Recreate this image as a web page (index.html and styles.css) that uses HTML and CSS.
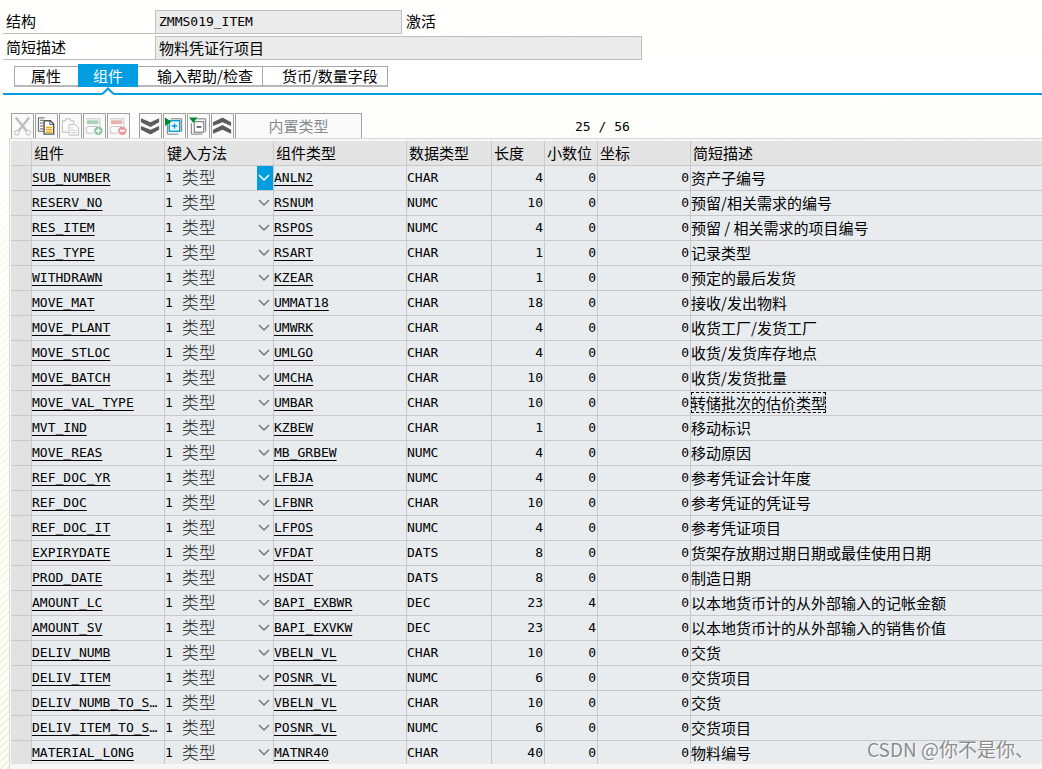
FILE: index.html
```html
<!DOCTYPE html>
<html lang="zh-CN">
<head>
    <meta charset="UTF-8">
    <meta name="viewport" content="width=device-width, initial-scale=1.0">
    <title>ZMMS019_ITEM</title>
    <link rel="stylesheet" href="styles.css">
</head>
<body>
    <form class="fields">
        <div class="field-row">
            <label for="structure">结构</label>
            <input class="mono name-input" id="structure" value="ZMMS019_ITEM" readonly>
            <span class="status">激活</span>
        </div>
        <div class="field-row">
            <label for="description">简短描述</label>
            <input class="description-input" id="description" value="物料凭证行项目" readonly>
        </div>
    </form>

    <nav class="tabs">
        <button class="tab">属性</button>
        <button class="tab selected">组件
            <svg class="caret" width="12" height="8" viewBox="0 0 12 8"><path d="M0 8V6.500L6 1L12 6.500V8Z" fill="#fff"/><path d="M0 6.500H1L6 1.500L11 6.500H12" fill="none" stroke="#009de0" stroke-width="2"/></svg>
        </button>
        <button class="tab wide">输入帮助/检查</button>
        <button class="tab wide">货币/数量字段</button>
    </nav>

    <div class="toolbar">
        <div class="tools">
            <button class="tool disabled" aria-label="剪切">
                <svg viewBox="0 0 22 24"><path d="M4 3L15 17M18 3L7 17" stroke="#c0c0c0" stroke-width="2.500" fill="none"/><circle cx="5" cy="19" r="2.500" stroke="#bbb" fill="none"/><circle cx="17" cy="19" r="2.500" stroke="#bbb" fill="none"/></svg>
            </button>
            <button class="tool" aria-label="复制">
                <svg viewBox="0 0 22 24"><path d="M8 17.500H2.500V3.500H9" stroke="#555" fill="#fff"/><path d="M4 6H8M4 9H8M4 12H8M4 15H8" stroke="#555"/><path d="M8.500 6.500H15L18.500 10V20.500H8.500Z" stroke="#555" stroke-width="1.500" fill="#fff"/><path d="M14.500 6.500V10.500H18.500" stroke="#555" fill="none"/><path d="M10.500 13.500H17M10.500 16H17M10.500 18.500H17" stroke="#f0ab00" stroke-width="1.500"/></svg>
            </button>
            <button class="tool disabled" aria-label="粘贴">
                <svg viewBox="0 0 22 24"><path d="M9 18.500H2.500V6.500H6V4.500H11V6.500H14.500V10" stroke="#bbb" fill="none"/><path d="M9.500 10.500H15L19.500 14V21.500H9.500Z" stroke="#bbb" fill="#fff"/><path d="M11 14H14M11 16.500H18M11 19H18" stroke="#c4c9d4"/></svg>
            </button>
            <button class="tool disabled" aria-label="插入行">
                <svg viewBox="0 0 22 24"><path d="M3 8H15" stroke="#a7d1b8" stroke-width="4"/><path d="M2 4.500H16M16.500 4V12M3 12.500H14M2.500 13V19.500H10" stroke="#c2c2c2" fill="none"/><circle cx="15" cy="17" r="4.500" fill="#8cc6a0"/><path d="M12.500 17H17.500M15 14.500V19.500" stroke="#fff" stroke-width="1.500"/></svg>
            </button>
            <button class="tool disabled" aria-label="删除行">
                <svg viewBox="0 0 22 24"><path d="M3 8H15" stroke="#e9b0b0" stroke-width="4"/><path d="M2 4.500H16M16.500 4V12M3 12.500H14M2.500 13V19.500H10" stroke="#c2c2c2" fill="none"/><circle cx="15" cy="17" r="4.500" fill="#e69c9c"/><path d="M12.500 17H17.500" stroke="#fff" stroke-width="2"/></svg>
            </button>
        </div>
        <div class="tools">
            <button class="tool" aria-label="全部展开">
                <svg viewBox="0 0 22 24"><path d="M1 4L11 8L20 4V8L11 13L1 8ZM1 12L11 16L20 12V16L11 21L1 16Z" fill="#5c5c5c"/></svg>
            </button>
            <button class="tool" aria-label="展开">
                <svg viewBox="0 0 22 24"><path d="M7 4.500H18.500V18M3.500 10V20.500H15" stroke="#777" fill="none"/><rect x="5.500" y="6.500" width="11" height="11" stroke="#009de0" stroke-width="1.500" fill="#fff"/><path d="M8 12H14M11 9V15" stroke="#009de0" stroke-width="1.500"/><path d="M1 3L8 7.500L1 12Z" fill="#008a2e"/></svg>
            </button>
            <button class="tool" aria-label="折叠">
                <svg viewBox="0 0 22 24"><path d="M9 4.500H18.500V18M3.500 9V20.500H15" stroke="#777" fill="none"/><rect x="6.500" y="7.500" width="10" height="11" stroke="#666" fill="#fff"/><path d="M9 13H14" stroke="#333" stroke-width="1.500"/><path d="M1 3H10L5.500 8.500Z" fill="#008a2e"/></svg>
            </button>
            <button class="tool" aria-label="全部折叠">
                <svg viewBox="0 0 22 24"><path d="M1 8L11 3L20 8V12L11 8L1 12ZM1 16L11 11L20 16V20L11 16L1 20Z" fill="#5c5c5c"/></svg>
            </button>
            <button class="tool builtin">内置类型</button>
        </div>
        <span class="mono counter">25 / 56</span>
    </div>

    <div class="grid-frame">
        <table class="grid">
            <colgroup>
                <col class="col-mark"><col class="col-name"><col class="col-method"><col class="col-type"><col class="col-data"><col class="col-length"><col class="col-decimals"><col class="col-coord"><col>
            </colgroup>
            <thead>
                <tr><th></th><th>组件</th><th>键入方法</th><th>组件类型</th><th>数据类型</th><th>长度</th><th>小数位</th><th>坐标</th><th>简短描述</th></tr>
            </thead>
            <tbody id="rows"></tbody>
        </table>
    </div>
    <div class="watermark">CSDN @你不是你、</div>

    <script>
        const components = [
            ['SUB_NUMBER', 'ANLN2', 'CHAR', 4, 0, '资产子编号'],
            ['RESERV_NO', 'RSNUM', 'NUMC', 10, 0, '预留/相关需求的编号'],
            ['RES_ITEM', 'RSPOS', 'NUMC', 4, 0, '预留 / 相关需求的项目编号'],
            ['RES_TYPE', 'RSART', 'CHAR', 1, 0, '记录类型'],
            ['WITHDRAWN', 'KZEAR', 'CHAR', 1, 0, '预定的最后发货'],
            ['MOVE_MAT', 'UMMAT18', 'CHAR', 18, 0, '接收/发出物料'],
            ['MOVE_PLANT', 'UMWRK', 'CHAR', 4, 0, '收货工厂/发货工厂'],
            ['MOVE_STLOC', 'UMLGO', 'CHAR', 4, 0, '收货/发货库存地点'],
            ['MOVE_BATCH', 'UMCHA', 'CHAR', 10, 0, '收货/发货批量'],
            ['MOVE_VAL_TYPE', 'UMBAR', 'CHAR', 10, 0, '转储批次的估价类型'],
            ['MVT_IND', 'KZBEW', 'CHAR', 1, 0, '移动标识'],
            ['MOVE_REAS', 'MB_GRBEW', 'NUMC', 4, 0, '移动原因'],
            ['REF_DOC_YR', 'LFBJA', 'NUMC', 4, 0, '参考凭证会计年度'],
            ['REF_DOC', 'LFBNR', 'CHAR', 10, 0, '参考凭证的凭证号'],
            ['REF_DOC_IT', 'LFPOS', 'NUMC', 4, 0, '参考凭证项目'],
            ['EXPIRYDATE', 'VFDAT', 'DATS', 8, 0, '货架存放期过期日期或最佳使用日期'],
            ['PROD_DATE', 'HSDAT', 'DATS', 8, 0, '制造日期'],
            ['AMOUNT_LC', 'BAPI_EXBWR', 'DEC', 23, 4, '以本地货币计的从外部输入的记帐金额'],
            ['AMOUNT_SV', 'BAPI_EXVKW', 'DEC', 23, 4, '以本地货币计的从外部输入的销售价值'],
            ['DELIV_NUMB', 'VBELN_VL', 'CHAR', 10, 0, '交货'],
            ['DELIV_ITEM', 'POSNR_VL', 'NUMC', 6, 0, '交货项目'],
            ['DELIV_NUMB_TO_S…', 'VBELN_VL', 'CHAR', 10, 0, '交货'],
            ['DELIV_ITEM_TO_S…', 'POSNR_VL', 'NUMC', 6, 0, '交货项目'],
            ['MATERIAL_LONG', 'MATNR40', 'CHAR', 40, 0, '物料编号']
        ];
        const focusedRow = 9;

        document.getElementById('rows').innerHTML = components.map(([name, type, data, length, decimals, text], i) => {
            const cut = name.endsWith('…');
            const label = cut ? name.slice(0, -1) : name;
            return `<tr>
                <td class="mark"></td>
                <td class="mono"><a href="#">${label}</a>${cut ? '…' : ''}</td>
                <td><div class="method"><span class="mono">1</span><select class="${i === 0 ? 'active' : ''}" aria-label="键入方法 ${label}"><option>类型</option></select></div></td>
                <td class="mono"><a href="#">${type}</a></td>
                <td class="mono">${data}</td>
                <td class="mono num">${length}</td>
                <td class="mono num">${decimals}</td>
                <td class="mono num">0</td>
                <td><span class="${i === focusedRow ? 'focused' : ''}">${text}</span></td>
            </tr>`;
        }).join('');
    </script>
</body>
</html>
```
FILE: styles.css
```css
* {
    box-sizing: border-box;
}
body {
    margin: 0;
    min-height: 100vh;
    position: relative;
    font-family: "Noto Sans CJK SC", sans-serif;
    font-size: 15px;
    font-weight: 400;
    line-height: 20px;
    color: #000;
    background: linear-gradient(#fffffe, rgba(255, 255, 250, 0.2)), repeating-linear-gradient(135deg, #fff 0 3px, #f4efcf 3px 5px);
}
button, input, select {
    font: inherit;
    color: inherit;
    margin: 0;
    border-radius: 0;
}
.mono {
    font-family: "DejaVu Sans Mono", monospace;
    font-size: 13px;
}
.fields {
    display: flex;
    flex-direction: column;
    gap: 2px;
    padding: 10px 0 0 3px;
}
.field-row {
    display: flex;
    height: 24px;
}
.field-row label {
    width: 152px;
    padding: 1px 3px;
    border-bottom: 1px solid #bdbdbd;
}
.field-row input {
    padding: 0 3px;
    background: #ebebeb;
    border: 1px solid #bfbfbf;
    outline: none;
}
.name-input {
    width: 247px;
}
.description-input {
    width: 487px;
}
.status {
    padding: 1px 4px;
}
.tabs {
    display: flex;
    align-items: flex-end;
    height: 35px;
    margin-left: 3px;
    padding: 0 11px 6px;
    background: #fff;
    border-bottom: 2px solid #009de0;
}
.tab {
    position: relative;
    height: 21px;
    line-height: 16px;
    padding: 0 17px 0 16px;
    background: #fff;
    border: 1px solid #a6a6a6;
    border-bottom: 2px solid #b8b8b8;
    border-right: none;
}
.tab:last-child {
    border-right: 1px solid #a6a6a6;
}
.tab.selected {
    height: 23px;
    padding: 0 15px;
    border: none;
    color: #fff;
    background: #009de0;
}
.tab.selected + .tab {
    border-left: none;
}
.tab.wide {
    padding: 0 9px 0 19px;
}
.caret {
    position: absolute;
    top: 100%;
    left: 24px;
}
.toolbar {
    display: flex;
    gap: 9px;
    height: 43px;
    padding: 18px 0 0 11px;
}
.tools {
    display: flex;
    gap: 1px;
}
.tool {
    width: 23px;
    height: 25px;
    padding: 0;
    background: #fafafa;
    border: 1px solid #a0a0a0;
    border-bottom: none;
}
.tool svg {
    display: block;
    width: 21px;
    height: 24px;
}
.tool.builtin {
    width: 127px;
    color: #858b90;
}
.counter {
    margin-left: 204px;
    padding-top: 4px;
}
.grid-frame {
    margin-left: 9px;
    padding: 2px 0 5px 1px;
    background: #f7f7f7;
    border-top: 1px solid #d8d8d8;
    border-left: 1px solid #d8d8d8;
}
.grid {
    width: 100%;
    table-layout: fixed;
    border-collapse: separate;
    border-spacing: 0;
    background: #e8ecef;
}
.col-mark { width: 21px; }
.col-name { width: 133px; }
.col-method { width: 109px; }
.col-type { width: 133px; }
.col-data { width: 85px; }
.col-length, .col-decimals { width: 53px; }
.col-coord { width: 93px; }
.grid th, .grid td {
    height: 25px;
    padding: 0 1px 0 0;
    border-right: 1px solid #c8c8c8;
    border-bottom: 1px solid #c8c8c8;
    text-align: left;
    white-space: nowrap;
}
.grid th:last-child, .grid td:last-child {
    border-right: none;
}
.grid th {
    padding-left: 2px;
    font-weight: 400;
    background: #e4e4e4;
}
.grid .mark {
    background: #e2e2e2;
}
.grid .num {
    text-align: right;
}
.grid tbody tr:last-child td {
    height: 23px;
    border-bottom: none;
}
.grid a {
    color: #000;
    text-decoration: underline;
    text-decoration-skip-ink: none;
    text-underline-offset: 3px;
}
.method {
    display: flex;
    align-items: center;
    height: 24px;
    margin-right: -1px;
}
.grid tr:last-child .method, .grid tr:last-child select {
    height: 23px;
}
.method select {
    flex: 1;
    height: 24px;
    margin-left: 9px;
    padding: 0 16px 2px 0;
    font-size: 17px;
    font-weight: 300;
    line-height: 22px;
    color: #222;
    border: none;
    outline: none;
    appearance: none;
    background: url("data:image/svg+xml,%3Csvg xmlns='http://www.w3.org/2000/svg' width='16' height='24'%3E%3Cpath d='M2 9l5 5 5-5' fill='none' stroke='%23777' stroke-width='1.500'/%3E%3C/svg%3E") no-repeat right center;
}
.method select.active {
    background-image: url("data:image/svg+xml,%3Csvg xmlns='http://www.w3.org/2000/svg' width='16' height='24'%3E%3Crect width='16' height='24' fill='%23009de0'/%3E%3Cpath d='M2 9l5 5 5-5' fill='none' stroke='%23fff' stroke-width='1.500'/%3E%3C/svg%3E");
}
.focused {
    outline: 1px dashed #000;
    outline-offset: -1px;
}
.watermark {
    position: absolute;
    right: 8px;
    bottom: 8px;
    font-size: 19px;
    line-height: 24px;
    color: #8c8c8c;
    text-shadow: 1px 1px 0 #fff;
    pointer-events: none;
}
```
